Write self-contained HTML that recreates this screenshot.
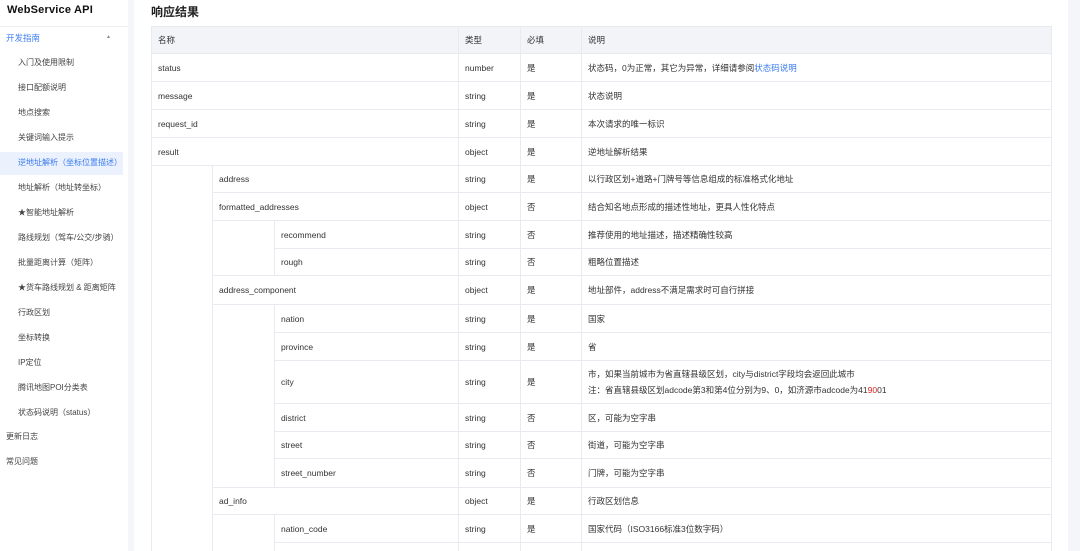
<!DOCTYPE html>
<html><head><meta charset="utf-8"><style>
*{margin:0;padding:0;box-sizing:border-box}
html{width:1080px;height:551px;overflow:hidden}
body{width:1080px;height:551px;overflow:hidden;background:#fff;font-family:"Liberation Sans","Noto Sans CJK SC",sans-serif;color:#333;position:relative}
.a{position:absolute;white-space:nowrap}
.side{position:absolute;left:0;top:0;width:128px;height:551px;background:#fff}
.strip{position:absolute;left:128px;top:0;width:6px;height:551px;background:#f5f6f9}
.strip2{position:absolute;left:1068px;top:0;width:12px;height:551px;background:#f5f6f9}
.si{position:absolute;left:18px;font-size:8px;color:#444;line-height:12px;white-space:nowrap}
.r{position:absolute;border-top:1px solid #e8eaef;border-bottom:1px solid #e8eaef;border-left:1px solid #e8eaef;font-size:8.5px;color:#333}
.r span{position:absolute;top:50%;transform:translateY(-50%);white-space:nowrap}
.v{position:absolute;top:26px;height:525px;width:1px;background:#e8eaef}
</style></head><body>
<div class="side">
<div class="a" style="left:7px;top:4px;font-size:11px;font-weight:bold;color:#111;letter-spacing:.2px">WebService API</div>
<div class="a" style="left:0;top:26px;width:128px;height:1px;background:#eceef2"></div>
<div class="a" style="left:6px;top:32px;font-size:8.5px;color:#3b7cf0">开发指南</div>
<div class="a" style="left:106px;top:34px;font-size:5px;color:#888">▲</div>
<div class="si" style="top:57px">入门及使用限制</div>
<div class="si" style="top:82px">接口配额说明</div>
<div class="si" style="top:107px">地点搜索</div>
<div class="si" style="top:132px">关键词输入提示</div>
<div class="a" style="left:0;top:152px;width:123px;height:23px;background:#ebf1fd"></div>
<div class="si" style="top:157px;color:#3b7cf0">逆地址解析（坐标位置描述）</div>
<div class="si" style="top:182px">地址解析（地址转坐标）</div>
<div class="si" style="top:207px">★智能地址解析</div>
<div class="si" style="top:232px">路线规划（驾车/公交/步骑）</div>
<div class="si" style="top:257px">批量距离计算（矩阵）</div>
<div class="si" style="top:282px">★货车路线规划 &amp; 距离矩阵</div>
<div class="si" style="top:307px">行政区划</div>
<div class="si" style="top:332px">坐标转换</div>
<div class="si" style="top:357px">IP定位</div>
<div class="si" style="top:382px">腾讯地图POI分类表</div>
<div class="si" style="top:407px">状态码说明（status）</div>
<div class="si" style="top:431px;left:6px">更新日志</div>
<div class="si" style="top:456px;left:6px">常见问题</div>
</div>
<div class="strip"></div>
<div class="strip2"></div>
<div class="a" style="left:151px;top:3px;font-size:12px;font-weight:bold;color:#222">响应结果</div>

<div class="r" style="left:151px;top:26px;width:901px;height:28px;background:#f3f4f8"><span style="left:6px">名称</span><span style="left:313px">类型</span><span style="left:375px">必填</span><span style="left:436px">说明</span></div>

<div class="r" style="left:151px;top:53px;width:901px;height:29px"><span style="left:6px">status</span><span style="left:313px">number</span><span style="left:375px">是</span><span style="left:436px">状态码，0为正常，其它为异常，详细请参阅<b style="font-weight:normal;color:#3b7cf0">状态码说明</b></span></div>
<div class="r" style="left:151px;top:81px;width:901px;height:29px"><span style="left:6px">message</span><span style="left:313px">string</span><span style="left:375px">是</span><span style="left:436px">状态说明</span></div>
<div class="r" style="left:151px;top:109px;width:901px;height:29px"><span style="left:6px">request_id</span><span style="left:313px">string</span><span style="left:375px">是</span><span style="left:436px">本次请求的唯一标识</span></div>
<div class="r" style="left:151px;top:137px;width:901px;height:29px"><span style="left:6px">result</span><span style="left:313px">object</span><span style="left:375px">是</span><span style="left:436px">逆地址解析结果</span></div>

<div class="r" style="left:212px;top:165px;width:840px;height:28px"><span style="left:6px">address</span><span style="left:252px">string</span><span style="left:314px">是</span><span style="left:375px">以行政区划+道路+门牌号等信息组成的标准格式化地址</span></div>
<div class="r" style="left:212px;top:192px;width:840px;height:29px"><span style="left:6px">formatted_addresses</span><span style="left:252px">object</span><span style="left:314px">否</span><span style="left:375px">结合知名地点形成的描述性地址，更具人性化特点</span></div>
<div class="r" style="left:274px;top:220px;width:778px;height:29px"><span style="left:6px">recommend</span><span style="left:190px">string</span><span style="left:252px">否</span><span style="left:313px">推荐使用的地址描述，描述精确性较高</span></div>
<div class="r" style="left:274px;top:248px;width:778px;height:28px"><span style="left:6px">rough</span><span style="left:190px">string</span><span style="left:252px">否</span><span style="left:313px">粗略位置描述</span></div>
<div class="r" style="left:212px;top:275px;width:840px;height:30px"><span style="left:6px">address_component</span><span style="left:252px">object</span><span style="left:314px">是</span><span style="left:375px">地址部件，address不满足需求时可自行拼接</span></div>
<div class="r" style="left:274px;top:304px;width:778px;height:29px"><span style="left:6px">nation</span><span style="left:190px">string</span><span style="left:252px">是</span><span style="left:313px">国家</span></div>
<div class="r" style="left:274px;top:332px;width:778px;height:29px"><span style="left:6px">province</span><span style="left:190px">string</span><span style="left:252px">是</span><span style="left:313px">省</span></div>
<div class="r" style="left:274px;top:360px;width:778px;height:44px"><span style="left:6px">city</span><span style="left:190px">string</span><span style="left:252px">是</span><span style="left:313px;line-height:16px">市，如果当前城市为省直辖县级区划，city与district字段均会返回此城市<br>注：省直辖县级区划adcode第3和第4位分别为9、0，如济源市adcode为41<b style="font-weight:normal;color:#e02020">90</b>01</span></div>
<div class="r" style="left:274px;top:403px;width:778px;height:29px"><span style="left:6px">district</span><span style="left:190px">string</span><span style="left:252px">否</span><span style="left:313px">区，可能为空字串</span></div>
<div class="r" style="left:274px;top:431px;width:778px;height:28px"><span style="left:6px">street</span><span style="left:190px">string</span><span style="left:252px">否</span><span style="left:313px">街道，可能为空字串</span></div>
<div class="r" style="left:274px;top:458px;width:778px;height:30px"><span style="left:6px">street_number</span><span style="left:190px">string</span><span style="left:252px">否</span><span style="left:313px">门牌，可能为空字串</span></div>
<div class="r" style="left:212px;top:487px;width:840px;height:28px"><span style="left:6px">ad_info</span><span style="left:252px">object</span><span style="left:314px">是</span><span style="left:375px">行政区划信息</span></div>
<div class="r" style="left:274px;top:514px;width:778px;height:29px"><span style="left:6px">nation_code</span><span style="left:190px">string</span><span style="left:252px">是</span><span style="left:313px">国家代码（ISO3166标准3位数字码）</span></div>
<div class="r" style="left:274px;top:542px;width:778px;height:9px;border-bottom:none"></div>

<div class="v" style="left:151px"></div>
<div class="v" style="left:458px"></div>
<div class="v" style="left:520px"></div>
<div class="v" style="left:581px"></div>
<div class="v" style="left:1051px"></div>
<div class="v" style="left:212px;top:165px;height:386px"></div>
</body></html>
